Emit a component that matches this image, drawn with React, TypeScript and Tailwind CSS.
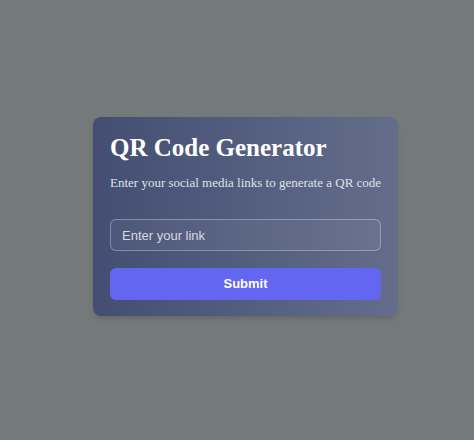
export default function App() {
  return (
    <div className="min-h-screen w-full bg-[#747979] pl-[93px] pt-[117px]">
      <div className="w-[305px] rounded-lg bg-gradient-to-r from-[#434e72] to-[#646d8b] px-[17px] pt-[17px] pb-[16px] shadow-md">
        <h1 className="font-['Liberation_Serif',serif] text-[25px] font-bold leading-[28px] text-white">
          QR Code Generator
        </h1>
        <p className="mt-[11px] whitespace-nowrap font-['Liberation_Serif',serif] text-[13px] leading-[20px] text-[#dfe2ec]">
          Enter your social media links to generate a QR code
        </p>
        <input
          type="text"
          placeholder="Enter your link"
          className="mt-[26px] block h-[32px] w-full rounded-md border border-white/30 bg-white/5 px-[11px] font-['Liberation_Sans',Arial,sans-serif] text-[13px] text-white outline-none placeholder:text-[#d6d9e4]"
        />
        <button className="mt-[17px] block h-[32px] w-full rounded-md bg-[#6366f1] font-['Liberation_Sans',Arial,sans-serif] text-[13px] font-bold text-white">
          Submit
        </button>
      </div>
    </div>
  );
}
